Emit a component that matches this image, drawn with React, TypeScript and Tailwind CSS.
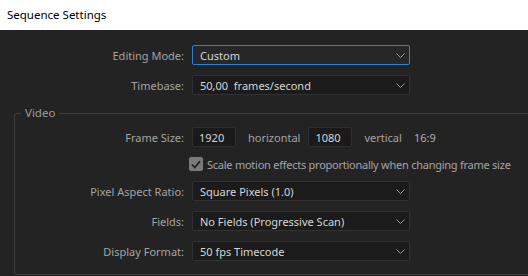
import { ReactNode } from "react";

function Chevron() {
  return (
    <svg width="9" height="5" viewBox="0 0 9 5" className="shrink-0">
      <path d="M0.5 0.5 L4.5 4.5 L8.5 0.5" fill="none" stroke="#9a9a9a" strokeWidth="1" />
    </svg>
  );
}

function Select({ value, focused }: { value: string; focused?: boolean }) {
  return (
    <div
      className={
        focused
          ? "ml-2 flex h-5 w-[218px] items-center justify-between rounded-[2px] border border-[#2d80d8] bg-[#272727] pl-[7px] pr-[4px] text-[#d6d6d6]"
          : "ml-2 flex h-5 w-[218px] items-center justify-between rounded-[2px] border border-[#313131] bg-[#1b1b1b] pl-[7px] pr-[4px] text-[#d6d6d6]"
      }
    >
      <span className="whitespace-pre">{value}</span>
      <Chevron />
    </div>
  );
}

function Row({ label, width, children }: { label: string; width: string; children: ReactNode }) {
  return (
    <div className="flex h-5 items-center whitespace-nowrap">
      <span className={`${width} shrink-0 text-right text-[#a3a3a3]`}>{label}</span>
      {children}
    </div>
  );
}

export default function App() {
  return (
    <div
      className="h-[276px] w-[528px] overflow-hidden bg-[#232323] text-[11px] leading-none"
      style={{ fontFamily: '"Noto Sans", "Open Sans", sans-serif' }}
    >
      <div className="flex h-[30px] items-center bg-white pl-[7px] text-[11.5px] text-black">
        Sequence Settings
      </div>

      <div className="flex flex-col gap-[10px] pt-[15px]">
        <Row label="Editing Mode:" width="w-[184px]">
          <Select value="Custom" focused />
        </Row>
        <Row label="Timebase:" width="w-[184px]">
          <Select value="50,00  frames/second" />
        </Row>
      </div>

      <fieldset className="-mr-4 ml-[14px] mt-[10px] h-[170px] rounded-l-[3px] border border-r-0 border-[#3a3a3a] pt-[6px]">
        <legend className="ml-[6px] px-[4px] text-[11.5px] leading-4 text-[#9c9c9c]">Video</legend>
        <div className="flex flex-col gap-[10px]">
          <Row label="Frame Size:" width="w-[169px]">
            <div className="ml-2 flex h-[20px] w-[44px] items-center rounded-[2px] border border-[#2e2e2e] bg-[#1a1a1a] pl-[6px] text-[#d6d6d6]">
              1920
            </div>
            <span className="ml-3 text-[#a3a3a3]">horizontal</span>
            <div className="ml-2 flex h-[20px] w-[44px] items-center rounded-[2px] border border-[#2e2e2e] bg-[#1a1a1a] pl-[6px] text-[#d6d6d6]">
              1080
            </div>
            <span className="ml-3 text-[#a3a3a3]">vertical</span>
            <span className="ml-3 text-[#b0b0b0]">16:9</span>
          </Row>
          <div className="flex h-[14px] items-center whitespace-nowrap pl-[174px]">
            <span className="flex h-[14px] w-[14px] items-center justify-center rounded-[2px] bg-[#7a7a7a]">
              <svg width="10" height="9" viewBox="0 0 10 9">
                <path d="M1 4.5 L3.8 7.5 L9 1.2" fill="none" stroke="#222" strokeWidth="1.8" />
              </svg>
            </span>
            <span className="ml-[4px] tracking-[-0.25px] text-[#a3a3a3]">
              Scale motion effects proportionally when changing frame size
            </span>
          </div>
          <Row label="Pixel Aspect Ratio:" width="w-[169px]">
            <Select value="Square Pixels (1.0)" />
          </Row>
          <Row label="Fields:" width="w-[169px]">
            <Select value="No Fields (Progressive Scan)" />
          </Row>
          <Row label="Display Format:" width="w-[169px]">
            <Select value="50 fps Timecode" />
          </Row>
        </div>
      </fieldset>
    </div>
  );
}
